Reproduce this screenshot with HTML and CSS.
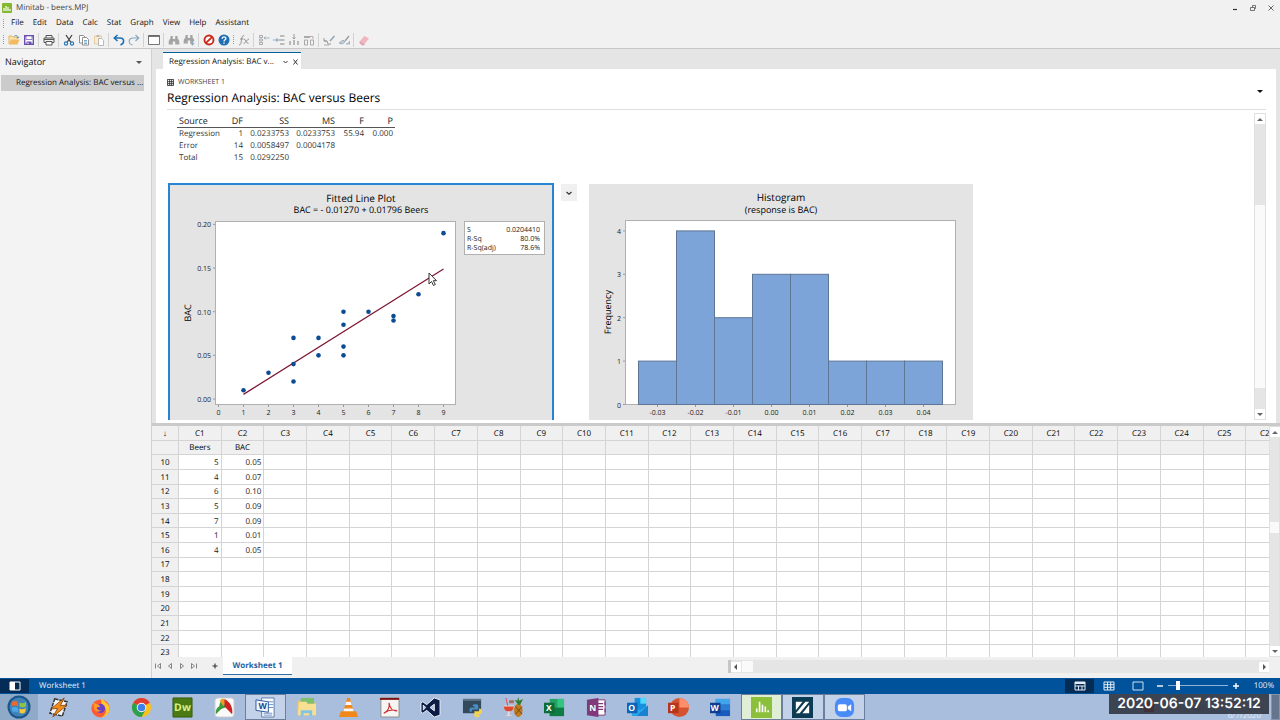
FILE: index.html
```html
<!DOCTYPE html>
<html lang="en">

<head>
    <meta charset="UTF-8">
    <meta name="viewport" content="width=device-width, initial-scale=1.0">
    <title>Minitab - beers.MPJ</title>
    <link rel="stylesheet" href="styles.css">
</head>

<body>
    <div class="app">
        <header class="top">
            <div class="titlebar">
                <svg class="logo" viewBox="0 0 10 10"><rect width="10" height="10" rx="1" fill="#83b82f"/><path d="M2 8V5M4 8V3M6 8V4M8 8V6" stroke="#fff" stroke-width="1.2"/></svg>
                <span>Minitab - beers.MPJ</span>
                <div class="window-btns">
                    <button aria-label="Minimize"><svg viewBox="0 0 8 8"><path d="M2 5.5h4" stroke="#333" stroke-width="1.2"/></svg></button>
                    <button aria-label="Restore"><svg viewBox="0 0 8 8"><path d="M1.5 3.5h4v3h-4zM3.5 3.5v-2h3v3h-1" fill="none" stroke="#555" stroke-width=".8"/></svg></button>
                    <button aria-label="Close"><svg viewBox="0 0 8 8"><path d="M1.5 1.5l5 5M6.5 1.5l-5 5" stroke="#555" stroke-width=".9"/></svg></button>
                </div>
            </div>
            <nav class="menu">
                <i class="grip"></i>
                <button>File</button>
                <button>Edit</button>
                <button>Data</button>
                <button>Calc</button>
                <button>Stat</button>
                <button>Graph</button>
                <button>View</button>
                <button>Help</button>
                <button>Assistant</button>
            </nav>
            <div class="toolbar">
                <i class="grip"></i>
                <button aria-label="Open"><svg viewBox="0 0 12 12"><path d="M1 10V2h3l1 1h4v2" fill="#fbe3ae" stroke="#e8a33d" stroke-width=".8"/><path d="M1 10.5L3 5.500h8.500L9.500 10.500z" fill="#f3b95f"/><path d="M6 2.500c2-2 4-1 4 1.500M8.800 3l1.200 1.200L11.300 3" fill="none" stroke="#3b8ac4" stroke-width=".8"/></svg></button>
                <button aria-label="Save"><svg viewBox="0 0 12 12"><path d="M1.700 1.700h8.600v8.600H1.700z" fill="#fff" stroke="#6a4fb0" stroke-width="1.400"/><path d="M3 2h6v3.500H3z" fill="#fff" stroke="#6a4fb0" stroke-width=".7"/><path d="M3.500 7.500h5V10h-5z" fill="#6a4fb0"/><path d="M4.500 8.500h1V10h-1z" fill="#fff"/></svg></button>
                <i class="sep"></i>
                <button aria-label="Print"><svg viewBox="0 0 12 12"><path d="M3 4V1.500h6V4M1 4h10v4.500H1z" fill="#f3f3f3" stroke="#555"/><path d="M1 5.500h10" stroke="#555"/><path d="M3 7.500h6v3.500H3z" fill="#fff" stroke="#555"/></svg></button>
                <i class="sep"></i>
                <button aria-label="Cut"><svg viewBox="0 0 12 12"><path d="M3 1l5 7.500M9 1L4 8.500" stroke="#444" stroke-width="1.300"/><circle cx="3" cy="9.500" r="1.600" fill="none" stroke="#2878b8" stroke-width="1.200"/><circle cx="9" cy="9.500" r="1.600" fill="none" stroke="#2878b8" stroke-width="1.200"/></svg></button>
                <button aria-label="Copy"><svg viewBox="0 0 12 12"><path d="M1.500 1.500h4l2 2v5.500h-6z" fill="#fff" stroke="#777" stroke-width=".8"/><path d="M4.500 3.500h4l2 2v5.500h-6z" fill="#fff" stroke="#777" stroke-width=".8"/><path d="M6 6.500h3M6 8h3M6 9.500h3" stroke="#3f86bd" stroke-width=".7"/></svg></button>
                <button aria-label="Paste"><svg viewBox="0 0 12 12"><path d="M1.500 2h7v8h-7z" fill="#fbecd0" stroke="#e3c48e" stroke-width=".8"/><path d="M3.500 1h3v2h-3z" fill="#bbb"/><path d="M5.500 4.500h3l2 2v5h-5z" fill="#fff" stroke="#aaa" stroke-width=".8"/></svg></button>
                <i class="sep"></i>
                <button aria-label="Undo"><svg viewBox="0 0 12 12"><path d="M4.500 1L1.200 4l3.300 3M1.500 4H7c4.500 0 5 5 .5 7" fill="none" stroke="#1f6fb5" stroke-width="1.500"/></svg></button>
                <button aria-label="Redo"><svg viewBox="0 0 12 12"><path d="M7.500 1l3.300 3-3.300 3M10.500 4H5C0 4 0 10 4.500 11" fill="none" stroke="#85a5bf" stroke-width="1.100"/></svg></button>
                <i class="sep"></i>
                <button aria-label="Command window"><svg viewBox="0 0 12 12"><path d="M.5 1.500h11v9H.5z" fill="#fff" stroke="#666" stroke-width=".9"/><path d="M.5 2.200h11" stroke="#555" stroke-width="1.200"/></svg></button>
                <i class="sep"></i>
                <button aria-label="Find"><svg viewBox="0 0 12 12"><path d="M2.500 2h2.300v3h2.400V2h2.300v2l1.800 3v3.500H7.200V7.500H4.800v3H.700V7l1.800-3z" fill="#a4a4a4"/></svg></button>
                <button aria-label="Find next"><svg viewBox="0 0 12 12"><path d="M2.500 1h2.300v3h2.400V1h2.300v2l1.800 3v1L8 9.500H7.200v-3H4.800v3H.700V6l1.800-3z" fill="#a4a4a4"/><path d="M9.500 6.500v4M7.800 9l1.700 2 1.700-2" fill="none" stroke="#8fa6b8" stroke-width="1.100"/></svg></button>
                <i class="sep"></i>
                <button aria-label="Cancel"><svg viewBox="0 0 12 12"><circle cx="6" cy="6" r="4.500" fill="#fff" stroke="#c92a1c" stroke-width="1.900"/><path d="M2.800 9.200l6.400-6.400" stroke="#c92a1c" stroke-width="1.900"/></svg></button>
                <button aria-label="Help"><svg viewBox="0 0 12 12"><circle cx="6" cy="6" r="5.500" fill="#1f6eb3"/><path d="M4.200 4.700c0-2.600 3.800-2.400 3.700-.2C7.900 5.800 6 5.800 6 7.500M6 8.500v1.300" fill="none" stroke="#fff" stroke-width="1.300"/></svg></button>
                <i class="grip"></i>
                <button aria-label="Assign formula"><svg viewBox="0 0 12 12"><path d="M1 11c2 0 2-2 2.400-4.500C3.900 3.500 4 1.500 6.200 1.500M2 5h3.500M6 5c2 0 2 4.500 4.500 4.500M11 5C9 5 7.500 9.500 5.500 9.500" fill="none" stroke="#8b8b8b" stroke-width=".9"/></svg></button>
                <i class="sep"></i>
                <button aria-label="Hide rows"><svg viewBox="0 0 12 12"><path d="M1.500 1.500h3v2h-3zM1.500 5h3v2h-3zM1.500 8.500h3v2h-3z" fill="none" stroke="#aaa"/><path d="M6 4h5.500M7.500 2.500L6 4l1.500 1.500" fill="none" stroke="#9fb3c2"/></svg></button>
                <button aria-label="Insert row"><svg viewBox="0 0 12 12"><path d="M7 2h4.500M6 6h5.500M7 10h4.500" stroke="#aaa" stroke-width="1.600"/><path d="M0 6h5M3.500 4.500L5 6 3.500 7.500" fill="none" stroke="#8eaac0" stroke-width="1.200"/></svg></button>
                <button aria-label="Insert column"><svg viewBox="0 0 12 12"><path d="M2 7v4M6 6v5M10 7v4" stroke="#aaa" stroke-width="1.600"/><path d="M6 0v5M4.500 3.500L6 5l1.500-1.500" fill="none" stroke="#9a9a9a"/></svg></button>
                <button aria-label="Move columns"><svg viewBox="0 0 12 12"><path d="M1 2h6v2H1z" fill="#aaa"/><path d="M1.500 6h3v5h-3zM7.500 6h3v5h-3z" fill="none" stroke="#aaa"/><path d="M7 2.500h3V5" fill="none" stroke="#bcaaa5"/></svg></button>
                <i class="sep"></i>
                <button aria-label="Previous brushed row"><svg viewBox="0 0 12 12"><path d="M1 4v3h3M1 7h3l1 3h3" fill="none" stroke="#999"/><path d="M11.500 2L7 7" stroke="#86a3b8" stroke-width="1.400"/><path d="M1 11h5" stroke="#aaa"/></svg></button>
                <button aria-label="Next brushed row"><svg viewBox="0 0 12 12"><path d="M11 2L7 7" stroke="#999" stroke-width="1.300"/><path d="M1 9l4-3 2 2-3 2zM8 10h3.500V7" fill="#c3ced6" stroke="#8fa6b6" stroke-width=".8"/></svg></button>
                <i class="sep"></i>
                <button aria-label="Clear"><svg viewBox="0 0 12 12"><path d="M6.500 2L11 4.500 6.500 10 1.500 7.500z" fill="#efb5c0"/><path d="M1.500 7.500L6.500 10v1.200H4L1.500 9z" fill="#df9baa"/></svg></button>
            </div>
        </header>

        <div class="main">
            <aside class="navigator">
                <div class="navigator-head">
                    <span>Navigator</span>
                    <i class="caret"></i>
                </div>
                <button class="navigator-item">Regression Analysis: BAC versus ...</button>
            </aside>

            <div class="work">
                <section class="output">
                    <div class="tabs">
                        <button class="tab">
                            <span>Regression Analysis: BAC v...</span>
                            <svg viewBox="0 0 16 8"><path d="M1.500 3l2 2 2-2M11.500 1.500l4 5M15.500 1.500l-4 5" fill="none" stroke="#333"/></svg>
                        </button>
                    </div>
                    <div class="pane">
                        <div class="pane-head">
                            <div>
                                <p class="sheet-name"><svg viewBox="0 0 8 8"><path d="M.5.5h7v7h-7zM.5 3h7M.5 5.300h7M3 .5v7M5.300.5v7" fill="none" stroke="#333"/></svg>WORKSHEET 1</p>
                                <h1>Regression Analysis: BAC versus Beers</h1>
                            </div>
                            <i class="caret"></i>
                        </div>
                        <div class="pane-body">
                            <div class="results">
                                <table class="anova">
                                    <tr><th>Source</th><th>DF</th><th>SS</th><th>MS</th><th>F</th><th>P</th></tr>
                                    <tr><td>Regression</td><td>1</td><td>0.0233753</td><td>0.0233753</td><td>55.94</td><td>0.000</td></tr>
                                    <tr><td>Error</td><td>14</td><td>0.0058497</td><td>0.0004178</td><td></td><td></td></tr>
                                    <tr><td>Total</td><td>15</td><td>0.0292250</td><td></td><td></td><td></td></tr>
                                </table>
                                <div class="graphs">
                                    <div class="graph selected"><svg id="fitted" width="382" height="260"></svg></div>
                                    <button class="graph-menu" aria-label="Graph options"><svg viewBox="0 0 8 8"><path d="M1.500 3L4 5.300 6.500 3" fill="none" stroke="#333" stroke-width="1.200"/></svg></button>
                                    <div class="graph"><svg id="histogram" width="384" height="260"></svg></div>
                                </div>
                            </div>
                            <div class="scroll-v">
                                <i class="arrow up"></i>
                                <i class="thumb"></i>
                                <i class="arrow down"></i>
                            </div>
                        </div>
                    </div>
                </section>

                <section class="worksheet">
                    <div class="grid-row">
                        <div class="grid-clip">
                            <table class="grid" id="grid"></table>
                        </div>
                        <div class="scroll-v">
                            <i class="arrow up"></i>
                            <i class="thumb"></i>
                            <i class="arrow down"></i>
                        </div>
                    </div>
                    <div class="sheet-bar">
                        <div class="sheet-nav">
                            <button aria-label="First sheet"><svg viewBox="0 0 8 8"><path d="M1.500 1.500v5M6.500 1.500v5L3.500 4z" fill="none" stroke="#777" stroke-width=".9"/></svg></button>
                            <button aria-label="Previous sheet"><svg viewBox="0 0 8 8"><path d="M5.500 1.500v5L2.500 4z" fill="none" stroke="#777" stroke-width=".9"/></svg></button>
                            <button aria-label="Next sheet"><svg viewBox="0 0 8 8"><path d="M2.500 1.500v5L5.500 4z" fill="none" stroke="#777" stroke-width=".9"/></svg></button>
                            <button aria-label="Last sheet"><svg viewBox="0 0 8 8"><path d="M6.500 1.500v5M1.500 1.500v5L4.500 4z" fill="none" stroke="#777" stroke-width=".9"/></svg></button>
                        </div>
                        <button class="add-sheet" aria-label="Add sheet"><svg viewBox="0 0 8 8"><path d="M4 1.500v5M1.500 4h5" stroke="#333" stroke-width="1.100"/></svg></button>
                        <button class="sheet-tab">Worksheet 1</button>
                        <div class="scroll-h">
                            <i class="arrow left"></i>
                            <i class="thumb"></i>
                            <i class="arrow right"></i>
                        </div>
                    </div>
                </section>
            </div>
        </div>

        <footer class="statusbar">
            <button class="on" aria-label="Toggle navigator"><svg viewBox="0 0 12 10"><path d="M1 1h10v8H1z" fill="#06284a" stroke="#fff"/><path d="M1 1h5v8H1z" fill="#fff"/></svg></button>
            <span class="status-text">Worksheet 1</span>
            <button class="on" aria-label="Split view"><svg viewBox="0 0 12 10"><path d="M1 1h10v8H1zM1 5h10M4.500 5v4M8 5v4" fill="none" stroke="#e3ecf5"/><path d="M1 2h10" stroke="#e3ecf5" stroke-width="2"/></svg></button>
            <button aria-label="Data view"><svg viewBox="0 0 12 10"><path d="M1 1h10v8H1zM1 3.700h10M1 6.300h10M4.500 1v8M7.700 1v8" fill="none" stroke="#e3ecf5"/></svg></button>
            <button aria-label="Output view"><svg viewBox="0 0 12 10"><path d="M1 1h10v8H1z" fill="none" stroke="#cfe0f0"/></svg></button>
            <button class="zoom-btn" aria-label="Zoom out"><svg viewBox="0 0 8 8"><path d="M1 4h6" stroke="#fff" stroke-width="1.400"/></svg></button>
            <input class="zoom" type="range" min="0" max="100" value="14" aria-label="Zoom">
            <button class="zoom-btn" aria-label="Zoom in"><svg viewBox="0 0 8 8"><path d="M1 4h6M4 1v6" stroke="#fff" stroke-width="1.400"/></svg></button>
            <span class="zoom-value">100%</span>
        </footer>

        <div class="taskbar">
            <button class="start" aria-label="Start"><svg viewBox="0 0 24 24"><circle cx="12" cy="12" r="11.500" fill="#1c5587"/><circle cx="12" cy="12" r="9.500" fill="#3f82b8"/><path d="M5 7c2-1.500 4-1.500 6 0v4.500c-2-1.300-4-1.300-6.500 0z" fill="#e9692d"/><path d="M12.500 7.500c2 1.200 4 1 6.500-.5v4.500c-2.500 1.500-4.500 1.300-6.500 0z" fill="#8cc24a"/><path d="M4.500 13c2.500-1.300 4.500-1.300 6.500 0v4.500c-2-1.300-3.500-1.300-5 0z" fill="#4aa9e8"/><path d="M12.500 13.500c2 1.200 4 1 6.500-.5l-1 4.500c-2 1.500-3.500 1.300-5.500.3z" fill="#f8c73c"/></svg></button>
            <div class="tasks">
                <button aria-label="Winamp"><svg viewBox="0 0 22 22"><path d="M7 2l13 3-5 15-13-3z" fill="#f4f4f4" stroke="#333" stroke-width="1.500" stroke-dasharray="4 1"/><path d="M17 1L3 12.500l7-.5-5 9L20 8.500l-7 .5z" fill="#f08a1c" stroke="#7a3c05" stroke-width=".8"/></svg></button>
                <button aria-label="Firefox"><svg viewBox="0 0 22 22"><circle cx="11" cy="12" r="9.500" fill="#ff5a36"/><path d="M12 1c1 3 8 5 8.500 11 0 5-4 9-9 9.500 5-2 7-8 3-12C12 8 11 5 12 1z" fill="#ffc92e"/><circle cx="11" cy="12" r="4.800" fill="#6b40c9"/><path d="M3 5c1 2 3 2 6 3l2 2-4 1c0 2 2 3.500 5 3-3 3-9 1-8-5z" fill="#ff9a23"/></svg></button>
                <button aria-label="Chrome"><svg viewBox="0 0 22 22"><circle cx="11" cy="11" r="10" fill="#fbc116"/><path d="M11 11L2.300 6A10 10 0 0 1 19.700 6z" fill="#e03c31"/><path d="M11 11L2.300 6A10 10 0 0 0 11 21l4-7z" fill="#2da04e"/><circle cx="11" cy="11" r="5" fill="#fff"/><circle cx="11" cy="11" r="4" fill="#3f7fe8"/></svg></button>
                <button aria-label="Dreamweaver"><svg viewBox="0 0 22 22"><path d="M1 1h20v20H1z" fill="#4c7a12" stroke="#365a0c"/><text class="mark wide" x="11" y="15" fill="#d8f08a">Dw</text></svg></button>
                <button aria-label="FreeFileViewer"><svg viewBox="0 0 22 22"><rect x="1" y="1" width="20" height="20" rx="3" fill="#fafafa" stroke="#c9c9c9"/><path d="M11 9L2 18c-1-6 3-10 9-9z" fill="#3a9b3c"/><path d="M10 3l2 8-6 2c-1-5 0-8 4-10z" fill="#3a9b3c"/><path d="M6 4c2-3 5-3 6 0l-2 6z" fill="#e8a020"/><path d="M11 2c6 3 9 9 8 16l-8-8z" fill="#cf2222"/></svg></button>
                <button class="open" aria-label="Word 2010"><svg viewBox="0 0 22 22"><path d="M7 1h13v20H7z" fill="#fff" stroke="#5578ab"/><path d="M14 5h5M14 8h5M14 11h5M9 17h9M9 19h9" stroke="#6a8cc0"/><path d="M1 3l13 2v11L1 14z" fill="#f1f6fc" stroke="#2b579a"/><text class="mark" x="8" y="13" fill="#1f4a94">W</text></svg></button>
                <button aria-label="Explorer"><svg viewBox="0 0 22 22"><path d="M1 4h7l2 2h11v13H1z" fill="#e8c25a"/><path d="M5 1h14v8H5z" fill="#7fbf70"/><path d="M3 5h8l1 2h9v12H2z" fill="#f7e093"/><path d="M5 20v-6h12v6h-3v-3H8v3z" fill="#82c4e6"/></svg></button>
                <button aria-label="VLC"><svg viewBox="0 0 22 22"><path d="M3 15h16l2 6H1z" fill="#f0881a"/><path d="M9.500 1h3L17 17c-3 1.500-9 1.500-12 0z" fill="#f0881a"/><path d="M8.600 5h4.800l1 3.500H7.500zM6.500 12h9l.8 3H5.700z" fill="#f6f6f6"/></svg></button>
                <button aria-label="Acrobat"><svg viewBox="0 0 22 22"><path d="M2 1h19v20H2z" fill="#f7f4f4" stroke="#8b8b8b"/><path d="M1 1h20v2H1z" fill="#7d1010"/><path d="M5 17c6-3 6-8 5.500-11 1 6 4 9 8.500 8.500-5-2-9-1-14 2.500z" fill="none" stroke="#cf2a2a" stroke-width="1.100"/></svg></button>
                <button aria-label="Visual Studio"><svg viewBox="0 0 22 22"><path d="M15 1l6 2v16l-6 2-8-7-4 3-2-1V6l2-1 4 3zM15 7.500L10.500 11l4.500 3.500zM3.500 8.500v5L6 11z" fill="#0c1c44" stroke="#eef2f8" fill-rule="evenodd"/></svg></button>
                <button aria-label="Python"><svg viewBox="0 0 22 22"><path d="M1 2h19v15H1z" fill="#33495c"/><path d="M1 2h19v2H1z" fill="#5c7488"/><path d="M11 9c0-2 6-2 6 0v4h-5c-2 0-2 2-2 3-3 0-3-5 0-5h4" fill="#4a8cc4"/><path d="M18 12c4 0 4 6 0 6h-1v1h2c0 3-6 3-6 0v-4h4c1 0 1-1 1-3z" fill="#f7d348"/></svg></button>
                <button aria-label="Fruit"><svg viewBox="0 0 22 22"><ellipse cx="16" cy="14" rx="4.500" ry="7" fill="#bd7a1e"/><path d="M13 10l7 8M20 10l-7 8" stroke="#76460e"/><path d="M16 8l-4-5 3 1 1-4 1 4 4-2-3 6z" fill="#2f7a2d"/><path d="M1 9h10c0 6-3 6-4 6v4h2v1H3v-1h2v-4c-2 0-4 0-4-6z" fill="#f0d8d0"/><path d="M1 10h10c0 5-3 5-5 5s-5 0-5-5z" fill="#dc4a35"/><path d="M3 1l2 8M7 4h4v2H7z" fill="#4aa84a" stroke="#df4b52"/></svg></button>
                <button aria-label="Excel"><svg viewBox="0 0 22 22"><path d="M6 2h15v18H6z" fill="#21a366"/><path d="M6 11h15v9H6z" fill="#107c41"/><path d="M14 2h7v9h-7z" fill="#33c481"/><path d="M0 6h11v11H0z" fill="#0e6b38"/><text class="mark" x="5" y="15" fill="#fff">X</text></svg></button>
                <button aria-label="OneNote"><svg viewBox="0 0 22 22"><path d="M11 3h9v16h-9z" fill="#fff" stroke="#80397b"/><path d="M12 7h6M12 10h6M12 13h6M20 5v4M20 12v4" stroke="#80397b" stroke-width="1.300"/><path d="M1 3l12-2v20L1 19z" fill="#80397b"/><text class="mark" x="7" y="15" fill="#fff">N</text></svg></button>
                <button aria-label="Outlook"><svg viewBox="0 0 22 22"><path d="M8 1h12v13H8z" fill="#1490df"/><path d="M14 1h6v6h-6z" fill="#50d9ff"/><path d="M5 9l8 5 9-5v11H5z" fill="#28a8ea"/><path d="M22 9L10 20h12z" fill="#1a80d0"/><path d="M0 6h11v11H0z" fill="#0a64b8"/><text class="mark" x="5" y="15" fill="#fff">O</text></svg></button>
                <button aria-label="PowerPoint"><svg viewBox="0 0 22 22"><circle cx="12" cy="11" r="10" fill="#d35230"/><path d="M12 1a10 10 0 0 1 10 10H12z" fill="#ff8f6b"/><path d="M0 6h11v11H0z" fill="#b7351a"/><text class="mark" x="5" y="15" fill="#fff">P</text></svg></button>
                <button aria-label="Word"><svg viewBox="0 0 22 22"><path d="M6 2h15v18H6z" fill="#185abd"/><path d="M6 2h15v6H6z" fill="#41a5ee"/><path d="M6 8h15v6H6z" fill="#2b7cd3"/><path d="M0 6h11v11H0z" fill="#103f91"/><text class="mark" x="5" y="15" fill="#fff">W</text></svg></button>
                <button class="open active" aria-label="Minitab"><svg viewBox="0 0 22 22"><path d="M0 0h22v22H0z" fill="#8cc03c"/><path d="M6 16v-4M9 16V5M12 16V8M15 16v-6M18 16v-2" stroke="#fff" stroke-width="1.700"/></svg></button>
                <button class="open" aria-label="Minitab Express"><svg viewBox="0 0 22 22"><path d="M0 0h22v22H0z" fill="#0b3c54"/><path d="M4 5h7L4 14zM4 17L14 5h4L8 17zM18 8v9h-7z" fill="#fff"/></svg></button>
                <button class="open" aria-label="Zoom"><svg viewBox="0 0 22 22"><rect x="1" y="1" width="20" height="20" rx="7" fill="#4a8cf7"/><rect x="4" y="7.500" width="9.500" height="7.500" rx="2" fill="#fff"/><path d="M14.500 10l3.500-2.500v7.500L14.500 12.500z" fill="#fff"/></svg></button>
            </div>
            <div class="tray">
                <svg class="tray-icons" viewBox="0 0 80 12"><rect width="10" height="10" fill="#c22"/><path d="M34 10V8M37 10V6M40 10V4M43 10V2" stroke="#aab" stroke-width="2"/><path d="M49 4h3l4-3v10l-4-3h-3zM58 3c2 2 2 4 0 6" fill="#99a" stroke="#99a"/></svg>
                <span class="tray-date">6/7/2020</span>
                <time class="stamp">2020-06-07 13:52:12</time>
            </div>
            <button class="show-desktop" aria-label="Show desktop"></button>
        </div>
    </div>

    <script src="script.js"></script>
</body>

</html>
```
FILE: styles.css
```css
* {
    box-sizing: border-box;
}

body {
    margin: 0;
    font-family: "Open Sans", "Noto Sans", sans-serif;
    font-size: 8px;
    line-height: 12px;
    text-rendering: geometricPrecision;
    color: #111;
    background: #f0f0f0;
    overflow: hidden;
}

button {
    display: flex;
    align-items: center;
    justify-content: center;
    margin: 0;
    padding: 0;
    border: 0;
    background: none;
    font: inherit;
    text-rendering: inherit;
    color: inherit;
}

svg {
    display: block;
    flex: none;
}

h1, p {
    margin: 0;
}

.app {
    display: flex;
    flex-direction: column;
    height: 100vh;
}

/* title, menu and toolbar */
.top {
    border-bottom: 1px solid #c8c8c8;
    background: #f1f1f1;
}

.titlebar {
    display: flex;
    align-items: center;
    gap: 4px;
    height: 15px;
    padding: 0 4px 0 2px;
    color: #444;
}

.logo {
    width: 10px;
    height: 10px;
}

.window-btns {
    display: flex;
    gap: 8px;
    margin-left: auto;
}

.window-btns svg {
    width: 10px;
    height: 8px;
}

.menu {
    display: flex;
    align-items: center;
    gap: 9px;
    height: 16px;
}

.grip {
    width: 1px;
    height: 9px;
    margin: 0 2px;
    border-left: 1px dotted #999;
}

.menu .grip {
    margin: 0 -2px 0 3px;
}

.toolbar {
    display: flex;
    align-items: center;
    height: 17px;
    padding-left: 1px;
}

.toolbar button {
    width: 15px;
    height: 15px;
}

.toolbar svg {
    width: 12px;
    height: 12px;
}

.sep {
    width: 1px;
    height: 14px;
    margin: 0 2px;
    background: #d2d2d2;
}

.main {
    display: flex;
    flex: 1;
    min-height: 0;
}

/* left column */
.navigator {
    width: 152px;
    border-right: 1px solid #d0d0d0;
    background: #f3f3f3;
}

.navigator-head {
    display: flex;
    align-items: center;
    justify-content: space-between;
    height: 26px;
    padding: 0 9px 0 5px;
    font-size: 9px;
}

.caret {
    border: 3px solid transparent;
    border-top-color: #555;
    border-bottom: 0;
}

.navigator-item {
    justify-content: flex-start;
    width: 143px;
    height: 16px;
    margin-left: 1px;
    padding-left: 15px;
    background: #cbcbcb;
    white-space: nowrap;
}

.work {
    display: flex;
    flex: 1;
    flex-direction: column;
    min-width: 0;
}

/* output pane */
.output {
    display: flex;
    flex: 1;
    flex-direction: column;
    min-height: 0;
    padding: 0 4px;
    background: #e5e5e5;
}

.tabs {
    display: flex;
    align-items: flex-end;
    height: 20px;
    padding-left: 7px;
}

.tab {
    justify-content: space-between;
    width: 138px;
    height: 17px;
    padding: 2px 3px 0 6px;
    border-top: 1px solid #00629b;
    background: #fff;
}

.tab svg {
    width: 16px;
    height: 8px;
}

.pane {
    display: flex;
    flex: 1;
    flex-direction: column;
    min-height: 0;
    padding: 5px 10px 3px 11px;
    background: #fff;
}

.pane-head {
    display: flex;
    align-items: center;
    justify-content: space-between;
    height: 36px;
    padding-right: 3px;
    border-bottom: 1px solid #ddd;
}

.pane-head .caret {
    border-top-color: #111;
}

.sheet-name {
    display: flex;
    align-items: center;
    gap: 4px;
    font-size: 7px;
    color: #444;
}

.sheet-name svg {
    width: 7px;
    height: 7px;
}

h1 {
    font-size: 12px;
    line-height: 18px;
    font-weight: 500;
    color: #000;
}

.pane-body {
    display: flex;
    flex: 1;
    min-height: 0;
    padding-top: 3px;
}

.results {
    flex: 1;
    min-width: 0;
    overflow: hidden;
}

.anova {
    width: 218px;
    margin: 0 0 19px 10px;
    border-spacing: 0;
    table-layout: fixed;
}

.anova th,
.anova td {
    padding: 0 2px;
    text-align: right;
    color: #333;
}

.anova th {
    width: 46px;
    height: 15px;
    padding-top: 1px;
    border-bottom: 1px solid #555;
    font-weight: normal;
    font-size: 9px;
    color: #222;
}

.anova th:first-child,
.anova td:first-child {
    text-align: left;
}

.anova th:nth-child(2) {
    width: 22px;
}

.anova th:nth-child(5),
.anova th:nth-child(6) {
    width: 29px;
}

.graphs {
    display: flex;
    align-items: flex-start;
    padding-left: 1px;
}

.graph {
    margin-top: 1px;
    background: #e4e4e4;
}

.graph.selected {
    margin-top: 0;
    border: 2px solid #2684d0;
}

.graph-menu {
    width: 16px;
    height: 17px;
    margin: 1px 12px 0 7px;
    background: #f0f0f0;
}

.graph-menu svg {
    width: 8px;
    height: 8px;
}

.graph text {
    font-size: 7px;
    fill: #222;
    text-anchor: middle;
}

.graph .title {
    font-size: 10px;
    font-weight: 500;
    fill: #000;
}

.graph .sub {
    font-size: 9px;
    fill: #000;
}

.graph .right {
    text-anchor: end;
}

.graph .left {
    text-anchor: start;
}

.frame {
    fill: #fff;
    stroke: #b0b0b0;
}

.tick {
    stroke: #999;
}

.dot {
    fill: #0b4c93;
}

.fit {
    stroke: #7c1530;
    stroke-width: 1.2;
}

.bar {
    fill: #7ca4d8;
    stroke: #5f7594;
}

.pointer {
    fill: #fff;
    stroke: #333;
}

/* scroll bars */
.scroll-v {
    display: flex;
    flex-direction: column;
    width: 12px;
    background: #e5e5e5;
    border: 1px solid #e0e0e0;
}

.arrow {
    display: flex;
    flex: none;
    align-items: center;
    justify-content: center;
    width: 10px;
    height: 10px;
    background: #fff;
}

.arrow::before {
    content: "";
    border: 3px solid transparent;
}

.up::before {
    border-top: 0;
    border-bottom-color: #666;
}

.down {
    margin-top: auto;
}

.down::before {
    border-bottom: 0;
    border-top-color: #666;
}

.arrow.left::before {
    border-left: 0;
    border-right-color: #555;
}

.arrow.right::before {
    border-right: 0;
    border-left-color: #555;
}

.thumb {
    background: #fafafa;
}

.output .thumb {
    height: 60%;
    margin-top: 81px;
}

/* worksheet */
.worksheet {
    border-top: 3px solid #cacaca;
    background: #f0f0f0;
}

.grid-row {
    display: flex;
    height: 231px;
}

.grid-clip {
    flex: 1;
    min-width: 0;
    overflow: hidden;
    background: #fff;
}

.grid {
    width: 1137px;
    height: 234px;
    border-spacing: 0;
    table-layout: fixed;
}

.grid th,
.grid td {
    padding: 1px 2px 0;
    border-right: 1px solid #d4d4d4;
    border-bottom: 1px solid #d4d4d4;
    line-height: 11px;
    white-space: nowrap;
}

.grid th {
    background: #f0f0f0;
    font-weight: 500;
    color: #000;
}

.grid td {
    text-align: right;
    color: #222;
}

.grid .corner {
    width: 27px;
}

.worksheet .scroll-v {
    width: 11px;
}

.worksheet .scroll-v .thumb {
    height: 11px;
    margin-top: 85px;
}

.sheet-bar {
    display: flex;
    height: 21px;
}

.sheet-nav {
    display: flex;
    align-items: center;
    height: 18px;
}

.sheet-nav button {
    width: 12px;
}

.sheet-nav svg,
.add-sheet svg {
    width: 8px;
    height: 8px;
}

.add-sheet {
    width: 23px;
    height: 18px;
    padding-left: 6px;
}

.sheet-tab {
    width: 69px;
    height: 18px;
    padding-top: 1px;
    border-bottom: 1px solid #2a6eab;
    background: #fff;
    font-weight: 700;
    color: #1d64a5;
}

.scroll-h {
    display: flex;
    align-items: center;
    width: 48%;
    height: 13px;
    margin: 3px 11px 0 auto;
    border-left: 3px solid #c6c6c6;
    background: #e5e5e5;
}

.scroll-h .thumb {
    width: 11px;
    height: 11px;
    margin-left: 1px;
}

.scroll-h .arrow.right {
    margin-left: auto;
}

/* blue status bar */
.statusbar {
    display: flex;
    align-items: center;
    height: 16px;
    padding-bottom: 1px;
    background: #00539b;
    color: #e8f0f8;
}

.statusbar button {
    width: 29px;
    height: 14px;
}

.statusbar .on {
    background: #052c56;
}

.statusbar svg {
    width: 12px;
    height: 10px;
}

.status-text {
    margin: 0 auto 0 10px;
}

.statusbar .zoom-btn {
    width: 16px;
}

.statusbar .zoom-btn svg {
    width: 8px;
    height: 8px;
}

.zoom {
    width: 60px;
    height: 10px;
    margin: 0;
    appearance: none;
    background: linear-gradient(#8db4d8, #8db4d8) center / 100% 1px no-repeat;
}

.zoom::-webkit-slider-thumb {
    appearance: none;
    width: 4px;
    height: 9px;
    background: #fff;
}

.zoom-value {
    width: 36px;
    padding-right: 6px;
    text-align: right;
}

/* windows task bar */
.taskbar {
    display: flex;
    height: 26px;
    background: #a9bedd;
}

.start {
    width: 38px;
    background: #8fa9c8;
}

.start svg {
    width: 24px;
    height: 24px;
}

.tasks {
    display: grid;
    grid-template-columns: repeat(20, 1fr);
    width: 827px;
}

.tasks svg {
    width: 21px;
    height: 21px;
}

.tasks .open {
    border: 1px solid #6b7f9c;
    background: #c3d2e8;
}

.tasks .active {
    background: #e0eed6;
}

.mark {
    font-size: 9px;
    font-weight: 700;
    text-anchor: middle;
}

.mark.wide {
    font-size: 11px;
}

.tray {
    position: relative;
    width: 160px;
    margin: 0 2px 0 auto;
}

.tray-date {
    position: absolute;
    right: 8px;
    bottom: 0;
    line-height: 8px;
    color: #e8eef8;
}

.stamp {
    position: absolute;
    top: 0;
    left: 0;
    width: 160px;
    height: 20px;
    background: rgba(44, 50, 62, 0.88);
    font-family: Inter, sans-serif;
    font-size: 14px;
    font-weight: 600;
    line-height: 20px;
    text-align: center;
    white-space: nowrap;
    color: #fff;
}

.tray-icons {
    position: absolute;
    top: 8px;
    left: 35px;
    width: 80px;
    height: 12px;
}

.show-desktop {
    width: 9px;
    border: 1px solid #8494ab;
    background: #66758c;
}
```
FILE: script.js
```js
var svgNs = "http://www.w3.org/2000/svg";

function add(svg, tag, attrs, text) {
    var el = document.createElementNS(svgNs, tag);
    for (var key in attrs) {
        el.setAttribute(key, attrs[key]);
    }
    if (text !== undefined) {
        el.textContent = text;
    }
    svg.appendChild(el);
}

// fitted line plot
var fitted = document.getElementById("fitted");
var beers = [[1, 0.01], [2, 0.03], [3, 0.07], [3, 0.04], [3, 0.02], [4, 0.07], [4, 0.05], [5, 0.1],
    [5, 0.085], [5, 0.06], [5, 0.05], [6, 0.1], [7, 0.095], [7, 0.09], [8, 0.12], [9, 0.19]];

function fx(v) {
    return 48.5 + v * 25;
}

function fy(v) {
    return 214 - v * 873;
}

add(fitted, "text", { x: 191, y: 17, class: "title" }, "Fitted Line Plot");
add(fitted, "text", { x: 191, y: 28, class: "sub" }, "BAC = - 0.01270 + 0.01796 Beers");
add(fitted, "rect", { x: 45.5, y: 36.5, width: 240, height: 183, class: "frame" });
for (var i = 0; i < 10; i++) {
    add(fitted, "line", { x1: fx(i), x2: fx(i), y1: 220, y2: 222, class: "tick" });
    add(fitted, "text", { x: fx(i), y: 230 }, i);
}
for (var j = 0; j < 5; j++) {
    var v = j * 0.05;
    add(fitted, "line", { x1: 43, x2: 45, y1: fy(v), y2: fy(v), class: "tick" });
    add(fitted, "text", { x: 41, y: fy(v) + 3, class: "right" }, v.toFixed(2));
}
add(fitted, "text", { transform: "translate(21 128) rotate(-90)", class: "sub" }, "BAC");
add(fitted, "line", { x1: fx(1), y1: fy(0.0053), x2: fx(9), y2: fy(0.149), class: "fit" });
beers.forEach(function (p) {
    add(fitted, "circle", { cx: fx(p[0]), cy: fy(p[1]), r: 2.3, class: "dot" });
});
add(fitted, "rect", { x: 294.5, y: 36.5, width: 80, height: 33, class: "frame" });
[["S", "0.0204410"], ["R-Sq", "80.0%"], ["R-Sq(adj)", "78.6%"]].forEach(function (row, n) {
    add(fitted, "text", { x: 297, y: 47 + n * 9, class: "left" }, row[0]);
    add(fitted, "text", { x: 370, y: 47 + n * 9, class: "right" }, row[1]);
});
add(fitted, "path", { d: "M259 88v11l2.500-2.500 2 4 1.800-1-2-3.800h3.200z", class: "pointer" });

// histogram of residuals
var histogram = document.getElementById("histogram");
var counts = [1, 4, 2, 3, 3, 1, 1, 1];
var barWidth = 38;

add(histogram, "text", { x: 192, y: 17, class: "title" }, "Histogram");
add(histogram, "text", { x: 192, y: 29, class: "sub" }, "(response is BAC)");
add(histogram, "rect", { x: 36.5, y: 36.5, width: 330, height: 184, class: "frame" });
for (var k = 0; k < 5; k++) {
    var ty = 220.5 - k * 43.4;
    add(histogram, "line", { x1: 34, x2: 36, y1: ty, y2: ty, class: "tick" });
    add(histogram, "text", { x: 32, y: ty + 3, class: "right" }, k);
}
counts.forEach(function (count, n) {
    var x = 49.5 + n * barWidth;
    add(histogram, "rect", { x: x, y: 220.5 - count * 43.4, width: barWidth, height: count * 43.4, class: "bar" });
    add(histogram, "line", { x1: x + 19, x2: x + 19, y1: 221, y2: 223, class: "tick" });
    add(histogram, "text", { x: x + 19, y: 231 }, ((n - 3) / 100).toFixed(2));
});
add(histogram, "text", { transform: "translate(22 128) rotate(-90)", class: "sub" }, "Frequency");

// worksheet cells
var data = { 10: [5, "0.05"], 11: [4, "0.07"], 12: [6, "0.10"], 13: [5, "0.09"], 14: [7, "0.09"], 15: [1, "0.01"], 16: [4, "0.05"] };
var names = ["Beers", "BAC"];
var columns = 26;
var html = "<tr><th class='corner'>&#8595;</th>";
for (var c = 1; c <= columns; c++) {
    html += "<th>C" + c + "</th>";
}
html += "</tr><tr><th></th>";
for (c = 0; c < columns; c++) {
    html += "<th>" + (names[c] || "") + "</th>";
}
html += "</tr>";
for (var r = 10; r <= 23; r++) {
    html += "<tr><th>" + r + "</th>";
    for (c = 0; c < columns; c++) {
        html += "<td>" + (data[r] && data[r][c] !== undefined ? data[r][c] : "") + "</td>";
    }
    html += "</tr>";
}
document.getElementById("grid").innerHTML = html;
```
